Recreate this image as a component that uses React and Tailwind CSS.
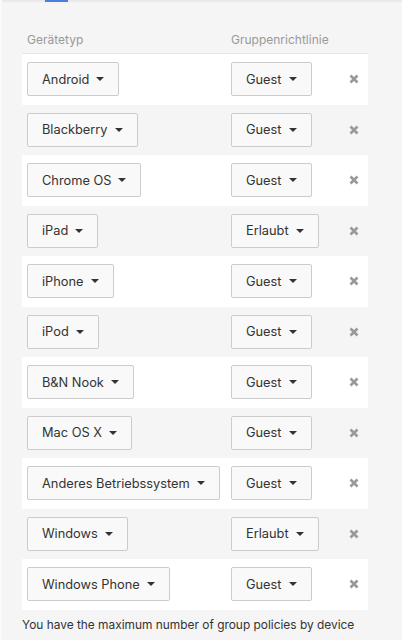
const ROWS = [
  { device: "Android", policy: "Guest" },
  { device: "Blackberry", policy: "Guest" },
  { device: "Chrome OS", policy: "Guest" },
  { device: "iPad", policy: "Erlaubt" },
  { device: "iPhone", policy: "Guest" },
  { device: "iPod", policy: "Guest" },
  { device: "B&N Nook", policy: "Guest" },
  { device: "Mac OS X", policy: "Guest" },
  { device: "Anderes Betriebssystem", policy: "Guest" },
  { device: "Windows", policy: "Erlaubt" },
  { device: "Windows Phone", policy: "Guest" },
];

const Caret = () => (
  <span className="inline-block ml-[7px] w-0 h-0 border-x-4 border-x-transparent border-t-4 border-t-[#333]" />
);

const DropButton = ({ label }) => (
  <button className="flex items-center h-[34px] px-[14px] bg-[#f9f9f9] border border-[#ccc] rounded-[2px] text-[12.8px] text-[#333]">
    {label}
    <Caret />
  </button>
);

const RemoveIcon = () => (
  <svg width="10" height="10" viewBox="0 0 10 10" className="text-[#999]">
    <path d="M1.5 1.5 L8.5 8.5 M8.5 1.5 L1.5 8.5" stroke="currentColor" strokeWidth="2.6" strokeLinecap="butt" />
  </svg>
);

export default function App() {
  return (
    <div
      className="relative min-h-[640px] bg-[#f5f5f5] border-l-2 border-l-[#fafafa]"
      style={{ fontFamily: "Inter, 'Noto Sans', sans-serif" }}
    >
      {/* scrolled-off tab bar edge */}
      <div className="h-[3px] bg-gradient-to-b from-[#e6e6e6] to-[#f5f5f5]" />
      <div className="absolute top-0 left-[43px] w-[23px] h-[2px] bg-[#4a7fe0]" />

      <div className="pl-5 pr-[34px] pt-[28px]">
        {/* header */}
        <div className="flex h-[23px] border-b border-[#e5e5e5] text-[12px] text-[#999]">
          <div className="w-[204px] pl-[5px]">Gerätetyp</div>
          <div className="pl-[5px]">Gruppenrichtlinie</div>
        </div>

        {ROWS.map((row, i) => (
          <div
            key={row.device}
            className={`flex items-center h-[50.5px] ${i % 2 === 0 ? "bg-white" : "bg-[#f5f5f5]"}`}
          >
            <div className="w-[204px] pl-[5px]">
              <DropButton label={row.device} />
            </div>
            <div className="w-[114px] pl-[5px]">
              <DropButton label={row.policy} />
            </div>
            <div className="flex-1 flex justify-center">
              <RemoveIcon />
            </div>
          </div>
        ))}

        <p className="pt-[6px] text-[11.9px] text-[#333] whitespace-nowrap">
          You have the maximum number of group policies by device
        </p>
      </div>
    </div>
  );
}
